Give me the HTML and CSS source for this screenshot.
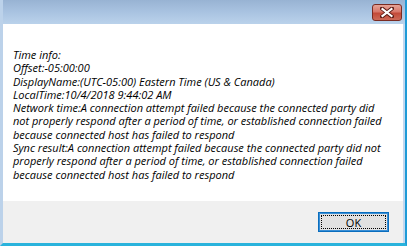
FILE: index.html
```html
<!DOCTYPE html>
<html>
<head>
<meta charset="utf-8">
<link rel="stylesheet" href="styles.css">
</head>
<body>
<div class="window">
  <div class="titlebar">
    <div class="close">
      <svg width="14" height="11" viewBox="0 0 14 11">
        <path d="M2 1.5 L12 9.5 M12 1.5 L2 9.5" stroke="#5a1a14" stroke-width="4" stroke-linecap="round"/>
        <path d="M2.5 2 L11.5 9 M11.5 2 L2.5 9" stroke="#ffffff" stroke-width="2.2" stroke-linecap="square"/>
      </svg>
    </div>
  </div>
  <div class="content">
    <div class="message">
      <div class="line">Time info:</div>
      <div class="line">Offset:-05:00:00</div>
      <div class="line">DisplayName:(UTC-05:00) Eastern Time (US &amp; Canada)</div>
      <div class="line">LocalTime:10/4/2018 9:44:02 AM</div>
      <div class="line">Network time:A connection attempt failed because the connected party did</div>
      <div class="line">not properly respond after a period of time, or established connection failed</div>
      <div class="line">because connected host has failed to respond</div>
      <div class="line">Sync result:A connection attempt failed because the connected party did not</div>
      <div class="line">properly respond after a period of time, or established connection failed</div>
      <div class="line">because connected host has failed to respond</div>
    </div>
  </div>
  <div class="footer">
    <div class="okbtn"><span class="oklabel">OK</span></div>
  </div>
</div>
</body>
</html>
```
FILE: styles.css
```css
html, body {
  margin: 0;
  padding: 0;
  background: #ffffff;
}
.window {
  width: 402px;
  height: 243px;
  display: flex;
  flex-direction: column;
  border-left: 3px solid #bcd2ea;
  border-right: 2px solid #1f9bd7;
  border-bottom: 3px solid #2ab3dc;
  box-shadow: inset -2px 0 0 #c3d8ef;
}
.titlebar {
  height: 24px;
  flex: none;
  display: flex;
  justify-content: flex-end;
  align-items: flex-start;
  background: linear-gradient(to bottom, #98b3d3 0%, #a9c3e1 50%, #bad2eb 100%);
  padding-right: 3px;
}
.close {
  margin-top: 4px;
  width: 28px;
  height: 15px;
  border: 1px solid #7a2b22;
  border-radius: 3px;
  background: linear-gradient(to bottom, #e6a396 0%, #d8776a 45%, #c34a39 55%, #cd6a58 100%);
  display: flex;
  align-items: center;
  justify-content: center;
}
.content {
  flex: 1;
  background: #ffffff;
  padding: 24px 0 0 10px;
  margin-right: 2px;
}
.message {
  font-family: "Open Sans", "Noto Sans", sans-serif;
  font-style: italic;
  font-size: 11px;
  line-height: 13.3px;
  color: #000000;
}
.line {
  white-space: nowrap;
}
.footer {
  height: 42px;
  flex: none;
  background: #f0f0f0;
  margin-right: 2px;
  display: flex;
  justify-content: flex-end;
  align-items: flex-start;
  padding-right: 14px;
  box-sizing: border-box;
  padding-top: 11px;
}
.okbtn {
  width: 71px;
  height: 20px;
  box-sizing: border-box;
  border: 1px solid #0b6ebe;
  background: #e1e1e1;
  box-shadow: inset 0 0 0 1px #3a8fd6;
  display: flex;
  align-items: center;
  justify-content: center;
  position: relative;
}
.okbtn::after {
  content: "";
  position: absolute;
  left: 2px;
  top: 2px;
  right: 2px;
  bottom: 2px;
  border: 1px dotted #000000;
}
.oklabel {
  font-family: "Open Sans", "Noto Sans", sans-serif;
  font-size: 11px;
  color: #000000;
}
```
